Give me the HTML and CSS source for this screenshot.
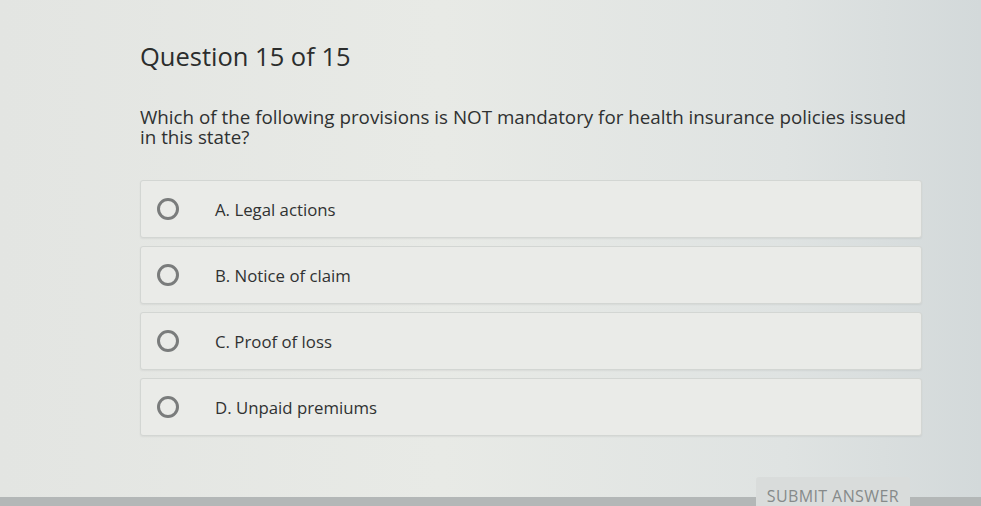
FILE: index.html
```html
<!DOCTYPE html>
<html lang="en">
<head>
    <meta charset="UTF-8">
    <meta name="viewport" content="width=device-width, initial-scale=1.0">
    <title>Question 15 of 15</title>
    <link rel="stylesheet" href="styles.css">
</head>
<body>
    <div class="quiz">
        <h1 class="quiz-title">Question 15 of 15</h1>

        <p class="question">Which of the following provisions is NOT mandatory for health insurance policies issued in this state?</p>

        <div class="options">
            <label class="option">
                <span class="radio"></span>
                <span class="option-text">A. Legal actions</span>
            </label>
            <label class="option">
                <span class="radio"></span>
                <span class="option-text">B. Notice of claim</span>
            </label>
            <label class="option">
                <span class="radio"></span>
                <span class="option-text">C. Proof of loss</span>
            </label>
            <label class="option">
                <span class="radio"></span>
                <span class="option-text">D. Unpaid premiums</span>
            </label>
        </div>

        <div class="actions">
            <button class="submit-btn">SUBMIT ANSWER</button>
        </div>
    </div>
</body>
</html>
```

FILE: styles.css
```css
html, body {
    height: 100%;
}
body {
    margin: 0;
    font-family: 'Open Sans', 'Noto Sans', sans-serif;
    color: #2f3131;
    background:
        linear-gradient(to bottom, transparent 497px, #b3b7b7 497px),
        linear-gradient(to right, #e3e5e2 0%, #e8eae6 45%, #dfe3e2 80%, #d3d9da 100%);
    overflow: hidden;
}
.quiz {
    width: 782px;
    margin-left: 140px;
    padding-top: 38px;
}
.quiz-title {
    margin: 0;
    font-size: 25.5px;
    font-weight: 400;
    line-height: 36px;
    color: #2b2d2d;
}
.question {
    margin: 33px 0 0;
    font-size: 18.8px;
    line-height: 20px;
    width: 785px;
}
.options {
    margin-top: 33px;
    display: flex;
    flex-direction: column;
    gap: 8px;
}
.option {
    display: flex;
    align-items: center;
    height: 56px;
    background-color: #eaebe8;
    border: 1px solid #d3d6d3;
    border-radius: 3px;
    box-shadow: 0 1px 2px rgba(0,0,0,0.06);
    cursor: pointer;
}
.radio {
    width: 16px;
    height: 16px;
    border: 3.5px solid #7a7c7c;
    border-radius: 50%;
    margin-left: 16px;
    flex-shrink: 0;
}
.option-text {
    margin-left: 36px;
    font-size: 16.8px;
    color: #303232;
}
.actions {
    display: flex;
    justify-content: flex-end;
    margin-top: 41px;
    padding-right: 12px;
}
.submit-btn {
    font-family: 'Open Sans', 'Noto Sans', sans-serif;
    font-size: 16px;
    letter-spacing: 0.4px;
    color: #868a8a;
    background-color: #d9dcdb;
    border: none;
    border-radius: 3px;
    padding: 8px 11px 12px;
    cursor: pointer;
}
```
